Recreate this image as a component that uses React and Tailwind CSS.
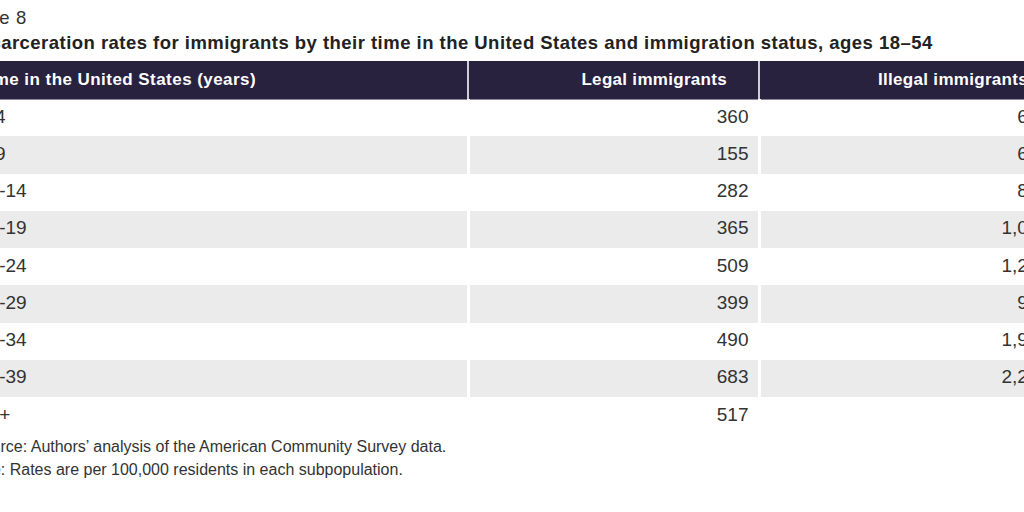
import React from "react";

const rows = [
  ["0-4", "360", "628"],
  ["5-9", "155", "640"],
  ["10-14", "282", "845"],
  ["15-19", "365", "1,029"],
  ["20-24", "509", "1,217"],
  ["25-29", "399", "936"],
  ["30-34", "490", "1,938"],
  ["35-39", "683", "2,257"],
  ["40+", "517", "—"],
];

export default function App() {
  return (
    <div className="w-[1024px] h-[512px] overflow-hidden bg-white text-[#333]" style={{ fontFamily: '"Liberation Sans", Arial, sans-serif' }}>
      <div className="ml-[-25px] w-[1100px]">
        {/* caption */}
        <div className="pt-[7px] ml-[-12px] text-[18.5px] leading-[22px] tracking-[0.6px] text-[#333]">Table 8</div>
        <h2 className="mt-[3px] ml-[-2px] text-[18.5px] leading-[22px] font-bold text-[#222] tracking-[0.47px] whitespace-nowrap">
          Incarceration rates for immigrants by their time in the United States and immigration status, ages 18–54
        </h2>

        <table className="mt-[7px] border-collapse table-fixed w-[1084px]">
          <colgroup>
            <col className="w-[493px]" />
            <col className="w-[291px]" />
            <col className="w-[300px]" />
          </colgroup>
          <thead>
            <tr className="bg-[#28223f] text-white h-[38px] border-b border-[#8a879a]">
              <th className="text-left font-bold text-[17px] tracking-[0.45px] pl-[3px] border-r-2 border-[#cfcdd6] whitespace-nowrap">Time in the United States (years)</th>
              <th className="text-right font-bold text-[17px] tracking-[0.3px] pr-[31px] border-r-2 border-[#cfcdd6] whitespace-nowrap">Legal immigrants</th>
              <th className="text-right font-bold text-[17px] tracking-[0.3px] pr-[31px] whitespace-nowrap">Illegal immigrants</th>
            </tr>
          </thead>
          <tbody>
            {rows.map((r, i) => (
              <tr key={r[0]} className={`h-[37.3px] text-[19px] ${i % 2 === 1 ? "bg-[#ebebeb]" : "bg-white"}`}>
                <td className="pl-[3px] pb-[2px] border-r-[3px] border-white">{r[0]}</td>
                <td className="text-right pr-[9px] pb-[2px] border-r-[3px] border-white">{r[1]}</td>
                <td className="text-right pr-[10px] pb-[2px]">{r[2]}</td>
              </tr>
            ))}
          </tbody>
        </table>

        <div className="mt-[0px] text-[16px] leading-[23px] text-[#333]">
          <p className="ml-[-3px]">Source: Authors’ analysis of the American Community Survey data.</p>
          <p className="ml-[-8px]">Note: Rates are per 100,000 residents in each subpopulation.</p>
        </div>
      </div>
    </div>
  );
}
